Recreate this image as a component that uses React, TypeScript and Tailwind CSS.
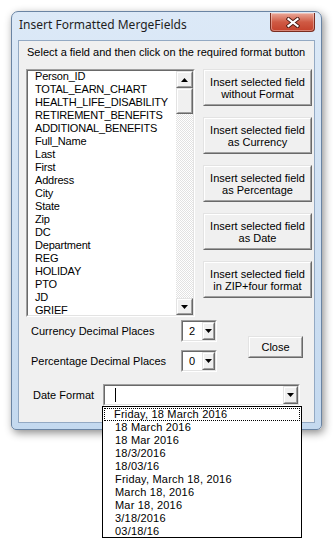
import type { ReactNode } from 'react';

const fields = [
  'Person_ID',
  'TOTAL_EARN_CHART',
  'HEALTH_LIFE_DISABILITY',
  'RETIREMENT_BENEFITS',
  'ADDITIONAL_BENEFITS',
  'Full_Name',
  'Last',
  'First',
  'Address',
  'City',
  'State',
  'Zip',
  'DC',
  'Department',
  'REG',
  'HOLIDAY',
  'PTO',
  'JD',
  'GRIEF',
];

const dateFormats = [
  'Friday, 18 March 2016',
  '18 March 2016',
  '18 Mar 2016',
  '18/3/2016',
  '18/03/16',
  'Friday, March 18, 2016',
  'March 18, 2016',
  'Mar 18, 2016',
  '3/18/2016',
  '03/18/16',
];

const buttons = [
  ['Insert selected field', 'without Format'],
  ['Insert selected field', 'as Currency'],
  ['Insert selected field', 'as Percentage'],
  ['Insert selected field', 'as Date'],
  ['Insert selected field', 'in ZIP+four format'],
];

function Arrow({ up = false }: { up?: boolean }) {
  return (
    <svg width="7" height="4" viewBox="0 0 7 4">
      <polygon points={up ? '3.5,0 7,4 0,4' : '0,0 7,0 3.5,4'} fill="#000" />
    </svg>
  );
}

// classic 3D sunken frame (VBA UserForm style)
function Sunken({ className = '', children }: { className?: string; children: ReactNode }) {
  return (
    <div className={`border border-t-[#a0a0a0] border-l-[#a0a0a0] border-r-white border-b-white ${className}`}>
      <div className="w-full h-full border border-t-[#696969] border-l-[#696969] border-r-[#e3e3e3] border-b-[#e3e3e3] bg-white flex">
        {children}
      </div>
    </div>
  );
}

function Raised({ className = '', children }: { className?: string; children?: ReactNode }) {
  return (
    <div className={`border border-t-[#e3e3e3] border-l-[#e3e3e3] border-r-[#696969] border-b-[#696969] bg-[#f0f0f0] ${className}`}>
      <div className="w-full h-full border border-t-white border-l-white border-r-[#a0a0a0] border-b-[#a0a0a0] flex items-center justify-center">
        {children}
      </div>
    </div>
  );
}

function CloseButton() {
  return (
    <div className="w-[45px] h-[19px] mt-[1px] rounded-b-[4px] border border-t-0 border-[#7a2d20] bg-gradient-to-b from-[#e9a899] via-[#cf5a44] to-[#c4412b] flex items-center justify-center shadow-[inset_0_0_0_1px_rgba(255,255,255,0.35)]">
      <svg width="14" height="11" viewBox="0 0 14 11">
        <path d="M2.5 2 L11.5 9 M11.5 2 L2.5 9" stroke="#4a1a12" strokeWidth="4" strokeLinecap="square" />
        <path d="M2.5 2 L11.5 9 M11.5 2 L2.5 9" stroke="#fff" strokeWidth="2.2" strokeLinecap="square" />
      </svg>
    </div>
  );
}

function Combo({ value, className = '' }: { value: string; className?: string }) {
  return (
    <Sunken className={className}>
      <div className="flex-1 flex items-center pl-[6px] leading-[13px]">{value}</div>
      <Raised className="w-[13px] h-full">
        <Arrow />
      </Raised>
    </Sunken>
  );
}

export default function App() {
  return (
    <div className="w-[333px] h-[542px] bg-white relative overflow-hidden pl-[11px] pt-[11px] font-['Liberation_Sans',Arial,sans-serif] text-[11px] text-black">
      <div className="w-[311px] h-[419px] rounded-t-[7px] rounded-b-[5px] border border-[#6a84a3] bg-gradient-to-b from-[#dce9f7] to-[#c4d9ef] shadow-[2px_3px_9px_rgba(0,0,0,0.45)] flex flex-col px-[6px] pb-[6px]">
        <div className="h-[28px] flex justify-between items-start">
          <span className="font-['Noto_Sans',sans-serif] text-[12px] leading-[16px] pt-[5px] pl-[1px] text-[#1e1e1e]">
            Insert Formatted MergeFields
          </span>
          <CloseButton />
        </div>

        <div className="flex-1 bg-[#f0f0f0] border border-[#93a9c3] flex flex-col relative">
          <div className="pl-[8px] pt-[5px] leading-[13px]">
            Select a field and then click on the required format button
          </div>

          <div className="flex mt-[10px] pl-[7px] gap-[8px]">
            <Sunken className="w-[169px] h-[248px]">
              <div className="flex-1 overflow-hidden pl-[7px] leading-[13px] tracking-[-0.2px] -mt-[1px]">
                {fields.map((f) => (
                  <div key={f} className="whitespace-nowrap">{f}</div>
                ))}
              </div>
              <div className="w-[17px] flex flex-col bg-[repeating-conic-gradient(#e2e2e2_0_25%,#ffffff_0_50%)] bg-[length:2px_2px]">
                <Raised className="h-[17px]">
                  <Arrow up />
                </Raised>
                <Raised className="h-[26px]" />
                <div className="flex-1" />
                <Raised className="h-[17px]">
                  <Arrow />
                </Raised>
              </div>
            </Sunken>

            <div className="flex flex-col gap-[11px]">
              {buttons.map(([a, b]) => (
                <Raised key={b} className="w-[109px] h-[37px]">
                  <div className="text-center leading-[12px]">
                    <div>{a}</div>
                    <div>{b}</div>
                  </div>
                </Raised>
              ))}
            </div>
          </div>

          <div className="flex items-center mt-[3px] pl-[12px]">
            <div className="flex flex-col gap-[8px]">
              <div className="flex items-center">
                <span className="w-[150px]">Currency Decimal Places</span>
                <Combo value="2" className="w-[36px] h-[22px]" />
              </div>
              <div className="flex items-center">
                <span className="w-[150px]">Percentage Decimal Places</span>
                <Combo value="0" className="w-[36px] h-[22px]" />
              </div>
            </div>
            <Raised className="w-[55px] h-[22px] ml-[31px] mt-[2px]">Close</Raised>
          </div>

          <div className="flex items-center mt-[12px] pl-[14px]">
            <span className="w-[70px]">Date Format</span>
            <div className="relative">
              <Sunken className="w-[197px] h-[22px]">
                <div className="flex-1 flex items-center pl-[10px]">
                  <div className="w-px h-[14px] bg-black" />
                </div>
                <Raised className="w-[15px] h-full">
                  <Arrow />
                </Raised>
              </Sunken>
              <div className="absolute left-[-1px] top-full w-[200px] h-[132px] bg-white border border-black z-10 px-[1px] pt-[1px] leading-[13px] tracking-[0.2px]">
                {dateFormats.map((d, i) => (
                  <div
                    key={d}
                    className={
                      i === 0
                        ? 'h-[13px] border border-dotted border-black pl-[9px] leading-[11px] whitespace-nowrap'
                        : 'h-[13px] pl-[11px] whitespace-nowrap'
                    }
                  >
                    {d}
                  </div>
                ))}
              </div>
            </div>
          </div>
        </div>
      </div>
    </div>
  );
}
